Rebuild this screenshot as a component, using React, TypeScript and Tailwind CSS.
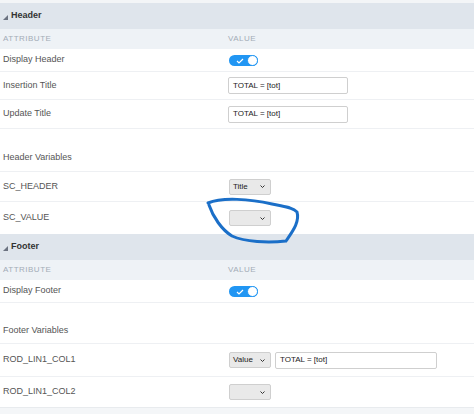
import React from "react";

const font = { fontFamily: '"Liberation Sans", Arial, sans-serif' };

function SectionHead({ title }: { title: string }) {
  return (
    <>
      <div className="flex h-[26px] items-center gap-[3px] bg-[#dfe5ec] pl-[3px]">
        <svg width="5" height="5" viewBox="0 0 5 5" className="mt-[2px]">
          <path d="M5 0 L5 5 L0 5 Z" fill="#6b7280" />
        </svg>
        <span className="text-[9px] font-bold text-[#333]">{title}</span>
      </div>
      <div className="flex h-[20px] items-center bg-[#eef2f6] text-[8px] tracking-[0.5px] text-[#a3acb6]">
        <span className="w-[228px] pl-[3px]">ATTRIBUTE</span>
        <span>VALUE</span>
      </div>
    </>
  );
}

function Row({ label, h, children, last }: { label: string; h: string; children?: React.ReactNode; last?: boolean }) {
  return (
    <div className={`flex items-center ${h} ${last ? "" : "border-b border-[#eef0f3]"}`}>
      <span className="w-[228px] pl-[3px] text-[9px] text-[#555]">{label}</span>
      <div className="flex items-center gap-[4px]">{children}</div>
    </div>
  );
}

function Toggle() {
  return (
    <div className="relative ml-[1px] h-[11px] w-[29px] rounded-full bg-[#2196f3]">
      <svg width="8" height="6" viewBox="0 0 8 6" className="absolute left-[7px] top-[3px]">
        <path d="M1 3 L3 5 L7 1" stroke="white" strokeWidth="1.2" fill="none" />
      </svg>
      <div className="absolute right-0 top-0 h-[11px] w-[11px] rounded-full border border-[#2196f3] bg-white" />
    </div>
  );
}

function TextBox({ w }: { w: string }) {
  return (
    <div className={`flex h-[17px] ${w} items-center rounded-[2px] border border-[#cfcfcf] bg-white pl-[4px] text-[8px] text-[#222]`}>
      TOTAL = [tot]
    </div>
  );
}

function Select({ value }: { value?: string }) {
  return (
    <div className="ml-[1px] flex h-[16px] w-[42px] items-center justify-between rounded-[2px] border border-[#cfcfcf] bg-[#e9e9e9] pl-[3px] pr-[5px] text-[8px] text-[#222]">
      <span>{value ?? ""}</span>
      <svg width="5" height="3" viewBox="0 0 5 3">
        <path d="M0.5 0.5 L2.5 2.5 L4.5 0.5" stroke="#333" strokeWidth="1" fill="none" />
      </svg>
    </div>
  );
}

export default function App() {
  return (
    <div className="relative h-[414px] w-[474px] overflow-hidden bg-white" style={font}>
      <div className="h-[3px] bg-[#f3f5f7]" />
      <SectionHead title="Header" />
      <Row label="Display Header" h="h-[23px]">
        <Toggle />
      </Row>
      <Row label="Insertion Title" h="h-[28px]">
        <TextBox w="w-[120px]" />
      </Row>
      <Row label="Update Title" h="h-[29px]">
        <TextBox w="w-[120px]" />
      </Row>
      <div className="flex h-[43px] items-end border-b border-[#eef0f3] pb-[7px] pl-[3px] text-[9px] text-[#555]">
        Header Variables
      </div>
      <Row label="SC_HEADER" h="h-[30px]">
        <Select value="Title" />
      </Row>
      <Row label="SC_VALUE" h="h-[32px]" last>
        <Select />
      </Row>
      <SectionHead title="Footer" />
      <Row label="Display Footer" h="h-[23px]">
        <Toggle />
      </Row>
      <div className="flex h-[41px] items-end border-b border-[#eef0f3] pb-[6px] pl-[3px] text-[9px] text-[#555]">
        Footer Variables
      </div>
      <Row label="ROD_LIN1_COL1" h="h-[33px]">
        <Select value="Value" />
        <TextBox w="w-[162px]" />
      </Row>
      <Row label="ROD_LIN1_COL2" h="h-[30px]" last>
        <Select />
      </Row>
      <div className="h-[7px] border-t border-[#e8ebee] bg-[#f4f6f8]" />

      <svg className="pointer-events-none absolute left-0 top-0" width="474" height="414">
        <path
          d="M208 203 C 222 197, 250 199, 272 204 C 285 207, 292 207, 297 212 C 300 222, 292 232, 286 241 C 268 243, 245 242, 232 236 C 222 230, 213 217, 209 205"
          stroke="#1b6fc8"
          strokeWidth="3"
          fill="none"
          strokeLinecap="round"
        />
      </svg>
    </div>
  );
}
